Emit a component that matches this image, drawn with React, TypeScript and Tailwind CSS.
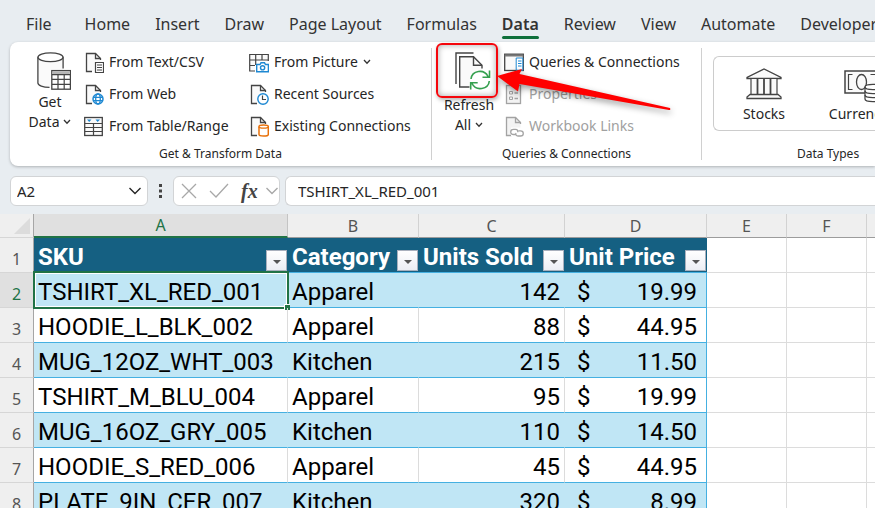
import { useState, type ReactNode } from "react"

type IconProps = { className?: string }

const INK = "#444444"
const BLUE = "#1e88d2"
const ORANGE = "#e8710a"
const GREEN = "#35a04f"
const FADED = "#a3a3a3"

function PageShape({ color = INK, fill = "#fafafa" }: { color?: string; fill?: string }) {
  return (
    <>
      <path d="M2.5 1.5H11.5L16.5 6.5V19.5H2.5Z" fill={fill} />
      <path d="M8 19.5H2.5V1.5H11.5L16.5 6.5V8" fill="none" stroke={color} strokeWidth="1.3" />
      <path d="M11.5 1.5V6.5H16.5" fill="none" stroke={color} strokeWidth="1.3" />
    </>
  )
}

function SmallIcon({ children }: { children: ReactNode }) {
  return (
    <svg viewBox="0 0 20 21" className="h-[21px] w-5 shrink-0" fill="none" aria-hidden="true">
      {children}
    </svg>
  )
}

function TextFileIcon() {
  return (
    <SmallIcon>
      <PageShape />
      <path d="M11.5 10.5H19.5V20.5H11.5Z" fill="#fff" stroke={INK} strokeWidth="1.2" />
      <path d="M13 13H18M13 15.5H18M13 18H18" stroke={INK} />
    </SmallIcon>
  )
}

function WebFileIcon() {
  return (
    <SmallIcon>
      <PageShape />
      <circle cx="14" cy="15" r="6" fill="#fff" />
      <circle cx="14" cy="15" r="5" stroke={BLUE} strokeWidth="1.5" />
      <ellipse cx="14" cy="15" rx="2.3" ry="5" stroke={BLUE} strokeWidth="1.3" />
      <path d="M9.5 13.3H18.5M9.5 16.7H18.5" stroke={BLUE} strokeWidth="1.3" />
    </SmallIcon>
  )
}

function TableRangeIcon() {
  return (
    <SmallIcon>
      <rect x="0.7" y="1.5" width="17.6" height="18" fill="#fafafa" stroke={INK} strokeWidth="1.3" />
      <path d="M1 7.5H18M1 11.5H18M1 15.5H18M9.5 7.5V19" stroke={INK} strokeWidth="1.2" />
      <path d="M3 3.5H7.5L5.2 6ZM11.5 3.5H16L13.7 6Z" fill={BLUE} />
    </SmallIcon>
  )
}

function PictureTableIcon() {
  return (
    <SmallIcon>
      <path d="M0.7 2.5H19.3V9H6V19H0.7Z" fill="#fafafa" />
      <path d="M6 19H0.7V2.5H19.3V9M0.7 8H19M0.7 13.5H6M6.7 2.5V13M13 2.5V8" stroke={INK} strokeWidth="1.2" />
      <path d="M7.7 12.5H11L12 10.8H15.5L16.5 12.5H19.4V19.8H7.7Z" fill="#fff" stroke={BLUE} strokeWidth="1.4" />
      <circle cx="13.6" cy="15.8" r="2.1" stroke={BLUE} strokeWidth="1.4" />
    </SmallIcon>
  )
}

function RecentIcon() {
  return (
    <SmallIcon>
      <PageShape />
      <circle cx="14" cy="15" r="6" fill="#fff" />
      <circle cx="14" cy="15" r="5.2" fill="#fff" stroke={BLUE} strokeWidth="1.4" />
      <path d="M13.5 11.5V15.5H17" stroke={INK} strokeWidth="1.2" />
    </SmallIcon>
  )
}

function ConnectionFileIcon() {
  return (
    <SmallIcon>
      <PageShape />
      <path d="M10 10.5C10 8.5 19.3 8.5 19.3 10.5V18.5C19.3 20.5 10 20.5 10 18.5Z" fill="#fff" stroke={ORANGE} strokeWidth="1.5" />
      <path d="M10 10.7C10 12.6 19.3 12.6 19.3 10.7" stroke={ORANGE} strokeWidth="1.4" />
    </SmallIcon>
  )
}

function QueriesIcon() {
  return (
    <SmallIcon>
      <rect x="0.7" y="2.2" width="18.6" height="16.3" fill="#fafafa" stroke={INK} strokeWidth="1.3" />
      <path d="M0.7 3.5H19.3" stroke="#777777" strokeWidth="2" />
      <path d="M12.2 6V18.2H18.8V6Z" fill="#fff" stroke={BLUE} />
      <path d="M14 9H17.5M14 11.5H17.5M14 14H17.5" stroke={BLUE} strokeWidth="1.2" />
    </SmallIcon>
  )
}

function PropertiesIcon() {
  return (
    <SmallIcon>
      <rect x="2.5" y="1.5" width="14" height="18" fill="#f3f3f3" stroke={FADED} strokeWidth="1.3" />
      <path d="M5.5 7.5H8.5V10H5.5ZM5.5 13H8.5V15.5H5.5Z" stroke={FADED} />
      <path d="M10.5 9H14M10.5 14.5H14" stroke={FADED} strokeWidth="1.3" />
    </SmallIcon>
  )
}

function LinksIcon() {
  return (
    <SmallIcon>
      <PageShape color={FADED} fill="#f3f3f3" />
      <rect x="7" y="11.5" width="13" height="9" fill="#fff" />
      <path
        d="M12 18.5H9.5C5.8 18.5 5.8 13.3 9.5 13.3H11.5C13.6 13.3 14.2 15 13.6 16.2M14.5 14.8H16.5C20.2 14.8 20.2 20 16.5 20H14C12 20 11.4 18.3 12 17"
        stroke={FADED}
        strokeWidth="1.3"
      />
    </SmallIcon>
  )
}

function DatabaseIcon({ className }: IconProps) {
  return (
    <svg viewBox="0 0 34 38" className={className} fill="none" aria-hidden="true">
      <path d="M1 5V31.5C1 34 7 35.5 13 35.5V18H26V5Z" fill="#fafafa" />
      <ellipse cx="13.5" cy="5.2" rx="12.6" ry="4.4" fill="#fff" stroke={INK} strokeWidth="1.3" />
      <path d="M0.9 5.2V31C0.9 33.5 6 35.3 12.5 35.3M26.1 5.2V16.5" stroke={INK} strokeWidth="1.3" />
      <rect x="14.8" y="18.6" width="18.6" height="18.6" fill="#fff" stroke={INK} strokeWidth="1.3" />
      <rect x="15.5" y="19.3" width="17.2" height="3" fill="#b5b5b5" />
      <path d="M15 22.6H33M15 27.4H33M15 32.3H33M21 22.6V37M27.2 22.6V37" stroke={INK} strokeWidth="1.2" />
    </svg>
  )
}

function RefreshIcon({ className }: IconProps) {
  return (
    <svg viewBox="0 0 36 38" className={className} fill="none" aria-hidden="true">
      <path d="M1 32V1H18.5" stroke={INK} strokeWidth="1.4" />
      <path d="M4.7 4.7H18.5L27 13.2V35H4.7Z" fill="#fafafa" />
      <path d="M14.5 35H4.7V4.7H18.5L27 13.2V16.5" stroke={INK} strokeWidth="1.4" />
      <path d="M18.5 4.7V13.2H27" stroke={INK} strokeWidth="1.4" />
      <circle cx="25" cy="28" r="9.5" fill="#fff" />
      <path
        d="M16 27C17 18.5 29 16.5 33 24.5M34.5 18.5V25.2H27.5M34.3 29C33.5 37.5 21 39.5 17 31.5M15.7 37.5V30.8H22.7"
        stroke={GREEN}
        strokeWidth="1.6"
      />
    </svg>
  )
}

function BankIcon() {
  return (
    <svg viewBox="0 0 36 32" className="h-8 w-9" fill="none" aria-hidden="true">
      <path d="M1 10.5V9.3L18 1L35 9.3V10.5Z" fill="#fafafa" stroke={INK} strokeWidth="1.3" />
      <path d="M5 10.5H31V26.5H5Z" fill="#fafafa" stroke={INK} strokeWidth="1.2" />
      <path d="M11.5 11V26M18 11V26M24.500 11V26" stroke={INK} strokeWidth="1.8" />
      <path d="M1 30.5V29L4 26.5H32L35 29V30.5Z" fill="#fafafa" stroke={INK} strokeWidth="1.3" />
    </svg>
  )
}

function MoneyIcon() {
  return (
    <svg viewBox="0 0 40 34" className="h-[34px] w-10 shrink-0" fill="none" aria-hidden="true">
      <rect x="1" y="1" width="38" height="22" fill="#fafafa" stroke={INK} strokeWidth="1.5" />
      <path d="M8.5 4.5H4.5V19.5H8.5M26.5 4.5H35.5V10" stroke={INK} strokeWidth="1.2" />
      <ellipse cx="17.5" cy="12" rx="5" ry="7.5" stroke={INK} strokeWidth="1.3" />
      <path d="M21 17C21 13.5 37 13.5 37 17V29C37 32.5 21 32.5 21 29Z" fill="#fff" stroke={INK} strokeWidth="1.3" />
      <path d="M21 17C21 20.5 37 20.5 37 17M21 21C21 24.5 37 24.5 37 21M21 25C21 28.5 37 28.5 37 25" stroke={INK} strokeWidth="1.3" />
    </svg>
  )
}

function Chevron() {
  return (
    <svg viewBox="0 0 12 8" className="h-2 w-3 shrink-0" fill="none" stroke="currentColor" strokeWidth="1.4" aria-hidden="true">
      <path d="M0.500 1L6 6.500L11.500 1" />
    </svg>
  )
}

function SmallChevron() {
  return (
    <svg viewBox="0 0 8 6" className="h-[6px] w-2 shrink-0" fill="none" aria-hidden="true">
      <path d="M1 1L4 4.2L7 1" stroke="#333333" strokeWidth="1.3" />
    </svg>
  )
}

const tabs = ["File", "Home", "Insert", "Draw", "Page Layout", "Formulas", "Data", "Review", "View", "Automate", "Developer"]

function TabStrip() {
  const [active, setActive] = useState("Data")
  return (
    <nav className="flex h-[42px] items-start gap-[25px] overflow-hidden pl-[26px] pt-3">
      {tabs.map((tab) => (
        <button
          key={tab}
          onClick={() => setActive(tab)}
          className={
            "flex shrink-0 flex-col text-base leading-6 text-[#333333] first:mr-2 " +
            (tab === active ? "font-semibold" : "")
          }
        >
          {tab}
          {tab === active && <span className="h-[3px] w-full rounded-full bg-[#0f703b]" />}
        </button>
      ))}
    </nav>
  )
}

type CommandProps = { icon: ReactNode; label: string; menu?: boolean; disabled?: boolean }

function Command({ icon, label, menu, disabled }: CommandProps) {
  return (
    <button
      disabled={disabled}
      className="flex h-8 items-center gap-[5px] whitespace-nowrap text-sm text-[#262626] disabled:text-[#a0a0a0]"
    >
      {icon}
      {label}
      {menu && <SmallChevron />}
    </button>
  )
}

function GroupLabel({ children }: { children: ReactNode }) {
  return <div className="mt-auto text-center text-xs leading-3 text-[#262626]">{children}</div>
}

function Ribbon() {
  return (
    <section className="relative ml-[10px] flex h-[124px] rounded-l-lg bg-white shadow-[0_1px_3px_rgba(0,0,0,0.25)]">
      <div className="my-[6px] flex w-[422px] shrink-0 flex-col border-r border-[#d0d0d0]">
        <div className="flex">
          <button className="ml-[14px] mt-1 flex w-[52px] flex-col items-center text-sm leading-5 text-[#262626]">
            <DatabaseIcon className="ml-2 h-[38px] w-[34px]" />
            <span className="mt-[2px]">Get</span>
            <span className="flex items-center gap-1">Data <SmallChevron /></span>
          </button>
          <div className="-mt-[2px] ml-2 w-[165px] shrink-0">
            <Command icon={<TextFileIcon />} label="From Text/CSV" />
            <Command icon={<WebFileIcon />} label="From Web" />
            <Command icon={<TableRangeIcon />} label="From Table/Range" />
          </div>
          <div className="-mt-[2px]">
            <Command icon={<PictureTableIcon />} label="From Picture" menu />
            <Command icon={<RecentIcon />} label="Recent Sources" />
            <Command icon={<ConnectionFileIcon />} label="Existing Connections" />
          </div>
        </div>
        <GroupLabel>Get &amp; Transform Data</GroupLabel>
      </div>

      <div className="my-[6px] flex w-[270px] shrink-0 flex-col border-r border-[#d0d0d0]">
        <div className="flex">
          <button className="relative ml-1 mt-1 flex w-[66px] flex-col items-center text-sm leading-5 text-[#262626]">
            <span className="absolute -top-[9px] left-0 h-[55px] w-[62px] rounded-md border-2 border-[#f5060c] shadow-[inset_0_0_6px_rgba(0,0,0,0.35),1px_2px_4px_rgba(0,0,0,0.3)]" />
            <RefreshIcon className="ml-2 h-[38px] w-9" />
            <span className="mt-[5px]">Refresh</span>
            <span className="flex items-center gap-1">All <SmallChevron /></span>
          </button>
          <div className="-mt-[2px] ml-[2px]">
            <Command icon={<QueriesIcon />} label="Queries & Connections" />
            <Command icon={<PropertiesIcon />} label="Properties" disabled />
            <Command icon={<LinksIcon />} label="Workbook Links" disabled />
          </div>
        </div>
        <GroupLabel>Queries &amp; Connections</GroupLabel>
      </div>

      <div className="my-[6px] ml-[11px] flex min-w-0 grow flex-col">
        <div className="mt-2 flex h-[75px] overflow-hidden rounded-l-md border border-r-0 border-[#cccccc] text-sm leading-5 text-[#262626]">
          <button className="flex w-[100px] shrink-0 flex-col items-center pt-[11px]">
            <BankIcon />
            <span className="mt-1">Stocks</span>
          </button>
          <button className="ml-3 flex w-[76px] shrink-0 flex-col items-center pt-[13px]">
            <MoneyIcon />
            <span>Currencies</span>
          </button>
        </div>
        <div className="mt-auto pl-[84px] text-xs leading-3 text-[#262626]">Data Types</div>
      </div>

      <svg
        viewBox="0 0 180 46"
        className="pointer-events-none absolute left-[485px] top-[24px] h-[46px] w-[180px] drop-shadow-[1px_3px_3px_rgba(0,0,0,0.4)]"
        aria-hidden="true"
      >
        <path d="M2 10L27 3L24.500 8L175 42Q176 44 174 44L24.500 18L23 25.500Z" fill="#ff0000" />
      </svg>
    </section>
  )
}

function FormulaBar() {
  const box = "flex h-[30px] items-center rounded-md border border-[#d2d4d6] bg-white"
  return (
    <div className="flex h-12 items-center pt-[2px] pl-[10px] text-[15px] text-[#262626]">
      <div className={box + " w-[138px] px-[6px]"}>
        <input aria-label="Name Box" defaultValue="A2" className="w-full min-w-0 outline-none" />
        <button aria-label="Named ranges" className="shrink-0">
          <Chevron />
        </button>
      </div>
      <svg viewBox="0 0 3 14" className="mx-[11px] h-[14px] w-[3px]" fill="#444444" aria-hidden="true">
        <path d="M0 0H3V3H0ZM0 5.500H3V8.500H0ZM0 11H3V14H0Z" />
      </svg>
      <div className={box + " w-[107px] gap-3 pl-[7px] text-[#a8a8a8]"}>
        <button aria-label="Cancel">
          <svg viewBox="0 0 16 16" className="size-4" fill="none" stroke="currentColor" strokeWidth="1.3">
            <path d="M1 1L15 15M15 1L1 15" />
          </svg>
        </button>
        <button aria-label="Enter">
          <svg viewBox="0 0 20 16" className="h-4 w-5" fill="none" stroke="currentColor" strokeWidth="1.3">
            <path d="M1 8L7 14L19 1" />
          </svg>
        </button>
        <button aria-label="Insert Function" className="flex items-center gap-2">
          <span className="font-['Liberation_Serif',serif] text-xl font-bold italic leading-6 text-[#444444]">fx</span>
          <Chevron />
        </button>
      </div>
      <div className={box + " ml-[5px] grow rounded-r-none border-r-0 px-3"}>
        <input aria-label="Formula Bar" defaultValue="TSHIRT_XL_RED_001" className="w-full outline-none" />
      </div>
    </div>
  )
}

const rows = [
  { sku: "TSHIRT_XL_RED_001", category: "Apparel", units: 142, price: "19.99" },
  { sku: "HOODIE_L_BLK_002", category: "Apparel", units: 88, price: "44.95" },
  { sku: "MUG_12OZ_WHT_003", category: "Kitchen", units: 215, price: "11.50" },
  { sku: "TSHIRT_M_BLU_004", category: "Apparel", units: 95, price: "19.99" },
  { sku: "MUG_16OZ_GRY_005", category: "Kitchen", units: 110, price: "14.50" },
  { sku: "HOODIE_S_RED_006", category: "Apparel", units: 45, price: "44.95" },
  { sku: "PLATE_9IN_CER_007", category: "Kitchen", units: 320, price: "8.99" },
]

const columns = ["A", "B", "C", "D", "E", "F", ""]
const headings = ["SKU", "Category", "Units Sold", "Unit Price"]

function RowNumber({ n, selected }: { n: number; selected?: boolean }) {
  return (
    <th
      className={
        "border-b border-r border-b-[#d6d6d6] border-r-[#a6a6a6] px-0 pb-0 pt-2 font-['Noto_Sans',sans-serif] text-base font-normal leading-6 " +
        (selected ? "bg-[#e0e0e0] text-[#217346]" : "bg-[#efefef] text-[#555555]")
      }
    >
      {n}
    </th>
  )
}

function EmptyCells() {
  return (
    <>
      <td className="border-b border-r border-[#dcdcdc]" />
      <td className="border-b border-r border-[#dcdcdc]" />
      <td className="border-b border-[#dcdcdc]" />
    </>
  )
}

function Sheet() {
  return (
    <table className="w-full table-fixed border-separate border-spacing-0 bg-white font-['Roboto',sans-serif] text-2xl text-black">
      <colgroup>
        <col className="w-[34px]" />
        <col className="w-[254px]" />
        <col className="w-[131px]" />
        <col className="w-[146px]" />
        <col className="w-[142px]" />
        <col className="w-20" />
        <col className="w-20" />
        <col />
      </colgroup>
      <thead>
        <tr className="h-6 bg-[#efefef] font-['Noto_Sans',sans-serif] text-base leading-[22px] text-[#555555]">
          <th className="border-b border-r border-b-[#d6d6d6] border-r-[#a6a6a6] p-0">
            <svg viewBox="0 0 16 16" className="ml-[14px] size-4" aria-hidden="true">
              <path d="M16 0V16H0Z" fill="#dcdcdc" />
            </svg>
          </th>
          {columns.map((name, i) => (
            <th
              key={i}
              className={
                "p-0 font-normal " +
                (name === "A"
                  ? "border-b-2 border-r border-b-[#217346] border-r-[#c4c4c4] bg-[#e0e0e0] text-[#217346]"
                  : "border-b border-r border-b-[#9c9c9c] border-r-[#d2d2d2] last:border-r-0")
              }
            >
              {name}
            </th>
          ))}
        </tr>
      </thead>
      <tbody>
        <tr className="h-[35px]">
          <RowNumber n={1} />
          {headings.map((h) => (
            <th key={h} className="border-b border-[#45b0e1] bg-[#156082] p-0 text-left font-bold text-white">
              <div className="flex h-[34px] items-end justify-between pl-1 pr-px">
                <span className="whitespace-nowrap leading-[30px]">{h}</span>
                <button
                  aria-label={"Filter " + h}
                  className="mb-px flex h-[21px] w-[21px] shrink-0 items-center justify-center border border-[#a9b0bd] bg-gradient-to-b from-white to-[#eceef4]"
                >
                  <svg viewBox="0 0 8 4" className="mt-[2px] h-1 w-2" aria-hidden="true">
                    <path d="M0 0H8L4 4Z" fill="#555555" />
                  </svg>
                </button>
              </div>
            </th>
          ))}
          <EmptyCells />
        </tr>
        {rows.map((row, i) => {
          const banded = i % 2 === 0
          const cell =
            "border-b border-b-[#45b0e1] pt-1 pb-0 leading-[30px] whitespace-nowrap " +
            (banded ? "bg-[#c0e6f5] border-r border-r-[#c0e6f5] " : "border-r border-r-[#dcdcdc] ")
          return (
            <tr key={row.sku} className="h-[35px]">
              <RowNumber n={i + 2} selected={i === 0} />
              <td className={cell + "relative px-1"}>
                {row.sku}
                {i === 0 && (
                  <span className="pointer-events-none absolute -left-px -right-[2px] -top-[2px] -bottom-[2px] border-2 border-[#217346]">
                    <span className="absolute inset-0 border border-white" />
                    <span className="absolute -bottom-[3px] -right-[3px] size-[6px] border-l border-t border-white bg-[#217346]" />
                  </span>
                )}
              </td>
              <td className={cell + "px-1"}>{row.category}</td>
              <td className={cell + "px-1 text-right"}>{row.units}</td>
              <td
                className={
                  "border-b border-r border-[#45b0e1] pb-0 pl-3 pr-[9px] pt-1 leading-[30px] " +
                  (banded ? "bg-[#c0e6f5]" : "")
                }
              >
                <div className="flex justify-between">
                  <span>$</span>
                  <span>{row.price}</span>
                </div>
              </td>
              <EmptyCells />
            </tr>
          )
        })}
      </tbody>
    </table>
  )
}

export default function App() {
  return (
    <div className="h-screen overflow-hidden bg-[#e8edf1] font-['Noto_Sans',sans-serif]">
      <TabStrip />
      <Ribbon />
      <FormulaBar />
      <Sheet />
    </div>
  )
}
